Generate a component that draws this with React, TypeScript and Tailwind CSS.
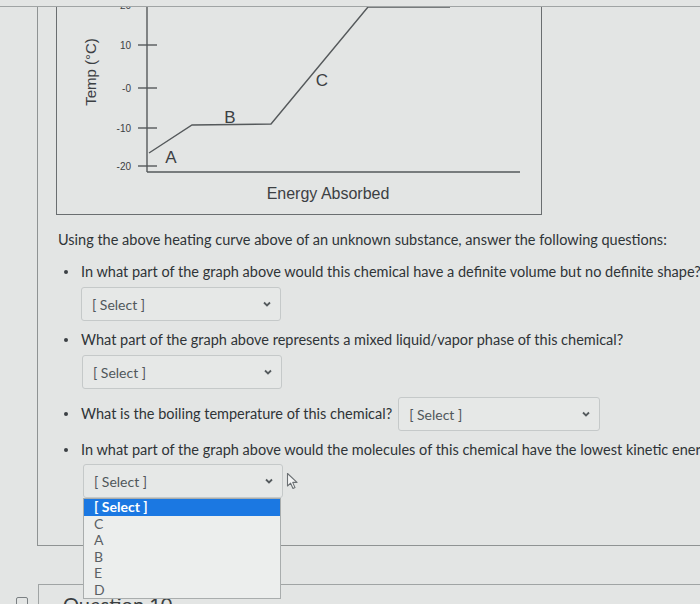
import React from "react";

const options = ["[ Select ]", "C", "A", "B", "E", "D"];

const Chevron = () => (
  <svg width="10" height="8" viewBox="0 0 10 8" className="shrink-0">
    <path d="M2 2.5 L5 5.5 L8 2.5" fill="none" stroke="#555b5e" strokeWidth="1.8" />
  </svg>
);

const SelectBox = ({ className = "" }: { className?: string }) => (
  <div
    className={`flex h-[34px] w-[200px] items-center justify-between rounded-[3px] border border-[#c5c9c9] bg-[#e6e8e7] pl-[10px] pr-[8px] ${className}`}
  >
    <span className="text-[14px] text-[#50575b]">[ Select ]</span>
    <Chevron />
  </div>
);

const Bullet = () => <span className="mr-[13px] h-[4px] w-[4px] shrink-0 rounded-full bg-[#3b4044]" />;

const Graph = () => {
  const ticks = [
    { y: 25, label: "20" },
    { y: 65, label: "10" },
    { y: 108, label: "-0" },
    { y: 148, label: "-10" },
    { y: 186, label: "-20" },
  ];
  return (
    <div className="ml-[18px] mt-[-20px] h-[235px] w-[486px] shrink-0 border-b border-l border-r border-[#6a6e70]">
      <svg width="484" height="234" viewBox="0 0 484 234" className="block">
        <g stroke="#55595b" strokeWidth="1.4" fill="none">
          <line x1="90" y1="10" x2="90" y2="192" />
          <line x1="90" y1="192" x2="463" y2="192" />
          {ticks.map((t) => (
            <line key={t.label} x1="81" y1={t.y} x2="100" y2={t.y} />
          ))}
          <polyline points="92,173 135,145 214,144 311,27 393,27" />
        </g>
        <g fill="#3c4043" fontFamily="'Liberation Sans', Arial, sans-serif">
          {ticks.map((t) => (
            <text key={t.label} x="74" y={t.y + 4} fontSize="10" textAnchor="end">
              {t.label}
            </text>
          ))}
          <text x="35" y="92" fontSize="15" textAnchor="middle" dominantBaseline="middle" transform="rotate(-90 35 92)">
            Temp (°C)
          </text>
          <text x="114" y="183" fontSize="17" textAnchor="middle">A</text>
          <text x="173" y="143" fontSize="17" textAnchor="middle">B</text>
          <text x="265" y="106" fontSize="17" textAnchor="middle">C</text>
          <text x="271" y="219" fontSize="16" textAnchor="middle">Energy Absorbed</text>
        </g>
      </svg>
    </div>
  );
};

export default function App() {
  return (
    <div className="relative h-[604px] w-[700px] overflow-hidden bg-[#e3e5e4] font-['Lato','Noto_Sans',sans-serif] text-[#2f3437]">
      <div className="absolute left-0 top-0 z-10 h-[7px] w-full border-b border-[#a0a4a4] bg-[#e3e5e4]" />

      <div className="ml-[37px] flex h-[546px] w-[700px] flex-col border-b border-l border-[#8f9393]">
        <Graph />
        <p className="mt-[14px] whitespace-nowrap pl-[20px] text-[14.5px] leading-[22px]">
          Using the above heating curve above of an unknown substance, answer the following questions:
        </p>
        <ul className="mt-[10px] pl-[26px]">
          <li>
            <div className="flex items-center whitespace-nowrap text-[14.5px] leading-[22px]">
              <Bullet />
              In what part of the graph above would this chemical have a definite volume but no definite shape?
            </div>
            <SelectBox className="ml-[17px] mt-[4px]" />
          </li>
          <li className="mt-[8px]">
            <div className="flex items-center whitespace-nowrap text-[14.5px] leading-[22px]">
              <Bullet />
              What part of the graph above represents a mixed liquid/vapor phase of this chemical?
            </div>
            <SelectBox className="ml-[18px] mt-[4px]" />
          </li>
          <li className="mt-[8px] flex items-center whitespace-nowrap text-[14.5px]">
            <Bullet />
            What is the boiling temperature of this chemical?
            <SelectBox className="ml-[6px] w-[202px]" />
          </li>
          <li className="mt-[8px]">
            <div className="flex items-center whitespace-nowrap text-[14.5px] leading-[22px]">
              <Bullet />
              In what part of the graph above would the molecules of this chemical have the lowest kinetic energy?
            </div>
            <div className="relative ml-[19px] mt-[3px] w-[198px]">
              <SelectBox className="w-[198px]" />
              <svg
                width="14"
                height="18"
                viewBox="0 0 14 18"
                className="absolute left-[203px] top-[8px]"
              >
                <path
                  d="M1.5 1.5 L1.5 14 L4.6 11.2 L7 16.5 L9 15.6 L6.7 10.4 L11 10.4 Z"
                  fill="#f4f5f5"
                  stroke="#6b7073"
                  strokeWidth="1.1"
                  strokeLinejoin="round"
                />
              </svg>
              <div className="absolute left-0 top-[34px] z-20 w-[198px] border border-[#a9adad] bg-[#eceeed] text-[14px] leading-[16.5px]">
                {options.map((o, i) => (
                  <div
                    key={o}
                    className={
                      i === 0
                        ? "bg-[#1b78e2] pl-[10px] font-bold text-white"
                        : "pl-[10px] text-[#5a6064]"
                    }
                  >
                    {o}
                  </div>
                ))}
              </div>
            </div>
          </li>
        </ul>
      </div>

      <div className="mt-[38px] flex">
        <div className="ml-[16px] mt-[13px] h-[12px] w-[12px] shrink-0 rounded-[2px] border border-[#7b8083]" />
        <div className="ml-[10px] flex-1 border-l border-t border-[#a0a4a4] pl-[24px] pt-[9px] text-[20px] leading-[20px] text-[#3a3f42]">
          Question 10
        </div>
      </div>
    </div>
  );
}
